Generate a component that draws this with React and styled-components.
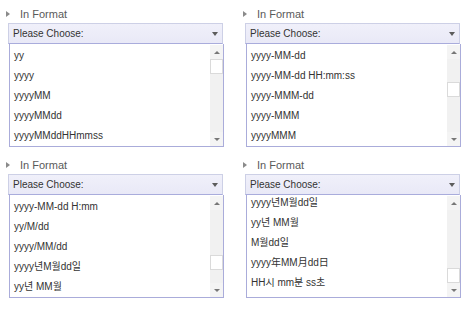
import React from "react";
import styled, { createGlobalStyle } from "styled-components";

const Global = createGlobalStyle`
  html, body { margin: 0; padding: 0; background: #ffffff; }
  body { font-family: "Liberation Sans", Arial, "Noto Sans CJK KR", sans-serif; }
`;

const Grid = styled.div`
  display: grid;
  grid-template-columns: 215px 215px;
  column-gap: 22px;
  padding-left: 8px;
  width: 474px;
  box-sizing: border-box;
`;

const Panel = styled.div`
  display: flex;
  flex-direction: column;
  height: 151px;
  padding-top: 5px;
  box-sizing: border-box;
`;

const Header = styled.div`
  display: flex;
  align-items: center;
  height: 18px;
  font-size: 11px;
  color: #5a5a5a;
`;

const Caret = styled.span`
  width: 0;
  height: 0;
  border-left: 4px solid #8a8a8a;
  border-top: 3px solid transparent;
  border-bottom: 3px solid transparent;
  margin-left: -2px;
  margin-right: 10px;
`;

const Select = styled.div`
  display: flex;
  align-items: center;
  justify-content: space-between;
  height: 21px;
  box-sizing: border-box;
  border: 1px solid #cdd0e6;
  border-bottom-color: #a9acdc;
  background: linear-gradient(#f0f0fa, #e9e9f7);
  padding: 0 4px 0 4px;
  font-size: 10px;
  color: #333;
`;

const DownArrow = styled.span`
  width: 0;
  height: 0;
  border-top: 4px solid #5c5c5c;
  border-left: 3px solid transparent;
  border-right: 3px solid transparent;
`;

const List = styled.div`
  display: flex;
  height: 103px;
  box-sizing: border-box;
  margin-left: 1px;
  margin-right: -1px;
  border: 1px solid #aaacda;
  border-top: none;
  background: #fff;
`;

const Items = styled.div`
  flex: 1;
  overflow: hidden;
`;

const ItemTrack = styled.div`
  padding-top: 2px;
  transform: translateY(${(p) => -p.$scroll}px);
`;

const Item = styled.div`
  height: 20px;
  line-height: 20px;
  padding-left: 4px;
  font-size: 10px;
  color: #333;
  white-space: nowrap;
`;

const Scrollbar = styled.div`
  width: 13px;
  display: flex;
  flex-direction: column;
  background: #f1f1f1;
  margin-top: 1px;
`;

const ScrollButton = styled.div`
  height: 14px;
  display: flex;
  align-items: center;
  justify-content: center;
  background: #f4f4f4;
`;

const UpGlyph = styled.span`
  width: 0;
  height: 0;
  border-bottom: 3px solid #777;
  border-left: 3px solid transparent;
  border-right: 3px solid transparent;
`;

const DownGlyph = styled.span`
  width: 0;
  height: 0;
  border-top: 3px solid #777;
  border-left: 3px solid transparent;
  border-right: 3px solid transparent;
`;

const ScrollTrack = styled.div`
  flex: 1;
  padding-top: ${(p) => p.$offset}px;
`;

const Thumb = styled.div`
  height: 15px;
  box-sizing: border-box;
  background: #fff;
  border: 1px solid #dadada;
`;

const panels = [
  {
    items: ["yy", "yyyy", "yyyyMM", "yyyyMMdd", "yyyyMMddHHmmss"],
    scroll: 0,
    thumb: 0,
  },
  {
    items: ["yyyy-MM-dd", "yyyy-MM-dd HH:mm:ss", "yyyy-MMM-dd", "yyyy-MMM", "yyyyMMM"],
    scroll: 0,
    thumb: 23,
  },
  {
    items: ["yyyy-MM-dd H:mm", "yy/M/dd", "yyyy/MM/dd", "yyyy년M월dd일", "yy년 MM월"],
    scroll: 0,
    thumb: 45,
  },
  {
    items: ["yyyy년M월dd일", "yy년 MM월", "M월dd일", "yyyy年MM月dd日", "HH시 mm분 ss초"],
    scroll: 4,
    thumb: 58,
  },
];

function FormatPanel({ items, scroll, thumb }) {
  return (
    <Panel>
      <Header>
        <Caret />
        In Format
      </Header>
      <Select>
        Please Choose:
        <DownArrow />
      </Select>
      <List>
        <Items>
          <ItemTrack $scroll={scroll}>
            {items.map((t) => (
              <Item key={t}>{t}</Item>
            ))}
          </ItemTrack>
        </Items>
        <Scrollbar>
          <ScrollButton>
            <UpGlyph />
          </ScrollButton>
          <ScrollTrack $offset={thumb}>
            <Thumb />
          </ScrollTrack>
          <ScrollButton>
            <DownGlyph />
          </ScrollButton>
        </Scrollbar>
      </List>
    </Panel>
  );
}

export default function App() {
  return (
    <>
      <Global />
      <Grid>
        {panels.map((p, i) => (
          <FormatPanel key={i} {...p} />
        ))}
      </Grid>
    </>
  );
}
